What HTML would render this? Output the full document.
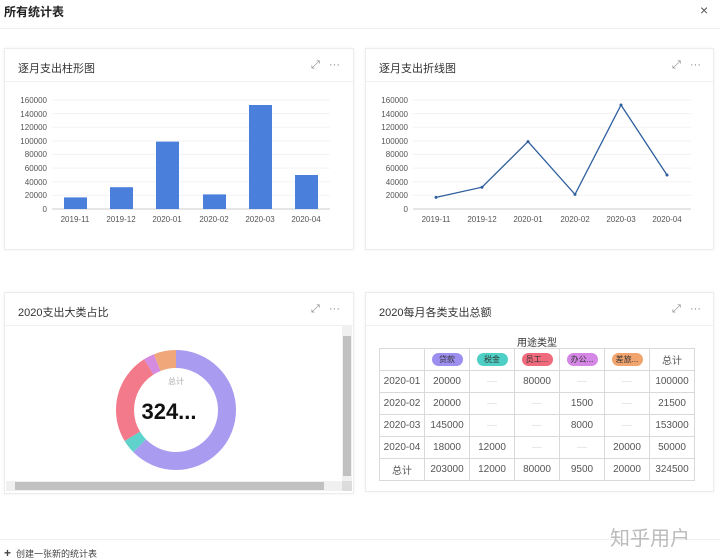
<!DOCTYPE html>
<html><head><meta charset="utf-8"><style>
*{margin:0;padding:0;box-sizing:border-box}
body{width:720px;height:560px;background:#fff;font-family:"Liberation Sans","Noto Sans CJK SC",sans-serif;position:relative;overflow:hidden;color:#333}
.a{position:absolute}
.card{position:absolute;background:#fff;border:1px solid #ececec;box-shadow:0 0 3px rgba(0,0,0,.06)}
.hd{position:absolute;left:0;right:0;top:0;height:33px;border-bottom:1px solid #f0f0f0;font-size:11px;color:#333;padding:11px 0 0 13px}
.ic{position:absolute;top:10px;font-size:11px;color:#888}
table{border-collapse:collapse;font-size:10px;color:#555}
td{border:1px solid #d9d9d9;height:22px;text-align:center;width:45px}
.tag{display:inline-block;width:31px;height:13px;border-radius:7px;font-size:8px;line-height:13px;color:#333}
.d{color:#ddd}
</style></head><body>
<div class="a" style="left:4px;top:3px;font-size:12px;font-weight:bold;color:#222">所有统计表</div>
<div class="a" style="left:700px;top:2px;font-size:14px;color:#555">×</div>
<div class="a" style="left:0;top:28px;width:720px;height:1px;background:#eee"></div>

<div class="card" style="left:4px;top:48px;width:350px;height:202px"><div class="hd">逐月支出柱形图</div><div class="ic" style="left:306px">⤢</div><div class="ic" style="left:324px">···</div></div>
<div class="card" style="left:365px;top:48px;width:349px;height:202px"><div class="hd">逐月支出折线图</div><div class="ic" style="left:306px">⤢</div><div class="ic" style="left:324px">···</div></div>
<div class="card" style="left:4px;top:292px;width:350px;height:202px"><div class="hd">2020支出大类占比</div><div class="ic" style="left:306px">⤢</div><div class="ic" style="left:324px">···</div></div>
<div class="card" style="left:365px;top:292px;width:349px;height:200px"><div class="hd">2020每月各类支出总额</div><div class="ic" style="left:306px">⤢</div><div class="ic" style="left:324px">···</div></div>

<svg class="a" style="left:0;top:0" width="720" height="560" font-family="Liberation Sans" font-size="8" fill="#555">
<g id="ax">
<g text-anchor="end">
<text x="47" y="103">160000</text><text x="47" y="117">140000</text><text x="47" y="130">120000</text><text x="47" y="144">100000</text><text x="47" y="157">80000</text><text x="47" y="171">60000</text><text x="47" y="185">40000</text><text x="47" y="198">20000</text><text x="47" y="212">0</text>
</g>
<g stroke="#f3f3f3"><line x1="52" x2="330" y1="100" y2="100"/><line x1="52" x2="330" y1="113.6" y2="113.6"/><line x1="52" x2="330" y1="127.2" y2="127.2"/><line x1="52" x2="330" y1="140.9" y2="140.9"/><line x1="52" x2="330" y1="154.5" y2="154.5"/><line x1="52" x2="330" y1="168.1" y2="168.1"/><line x1="52" x2="330" y1="181.7" y2="181.7"/><line x1="52" x2="330" y1="195.4" y2="195.4"/></g>
<line x1="52" x2="330" y1="209" y2="209" stroke="#ccc"/>
<g text-anchor="middle"><text x="75" y="222">2019-11</text><text x="121" y="222">2019-12</text><text x="167" y="222">2020-01</text><text x="214" y="222">2020-02</text><text x="260" y="222">2020-03</text><text x="306" y="222">2020-04</text></g>
</g>
<use href="#ax" x="361"/>
<g fill="#4a7fdb"><rect x="64" y="197.4" width="23" height="11.6"/><rect x="110" y="187.2" width="23" height="21.8"/><rect x="156" y="141.6" width="23" height="67.4"/><rect x="203" y="194.4" width="23" height="14.6"/><rect x="249" y="105" width="23" height="104"/><rect x="295" y="175" width="23" height="34"/></g>
<polyline fill="none" stroke="#2e5e9e" stroke-width="1.3" points="436,197.4 482,187.2 528,141.6 575,194.4 621,105 667,175"/>
<g fill="#2e5e9e"><circle cx="436" cy="197.4" r="1.5"/><circle cx="482" cy="187.2" r="1.5"/><circle cx="528" cy="141.6" r="1.5"/><circle cx="575" cy="194.4" r="1.5"/><circle cx="621" cy="105" r="1.5"/><circle cx="667" cy="175" r="1.5"/></g>

<g transform="rotate(-90 176 410)" fill="none" stroke-width="18">
<circle cx="176" cy="410" r="51" stroke="#a99cf0" stroke-dasharray="200.4 400"/>
<circle cx="176" cy="410" r="51" stroke="#5fd3cb" stroke-dasharray="0 200.4 11.9 400"/>
<circle cx="176" cy="410" r="51" stroke="#f27a8a" stroke-dasharray="0 212.3 79 400"/>
<circle cx="176" cy="410" r="51" stroke="#d48be0" stroke-dasharray="0 291.3 9.4 400"/>
<circle cx="176" cy="410" r="51" stroke="#f0a87a" stroke-dasharray="0 300.7 19.7 400"/>
</g>
<text x="176" y="384" text-anchor="middle" fill="#aaa" font-size="8" font-family="Noto Sans CJK SC">总计</text>
<text x="169" y="419" text-anchor="middle" fill="#111" font-size="22" font-weight="bold">324...</text>
<rect x="342" y="326" width="10" height="155" fill="#f0f0f0"/><rect x="343" y="336" width="8" height="140" fill="#c1c1c1"/>
<rect x="6" y="481" width="336" height="10" fill="#f0f0f0"/><rect x="15" y="482" width="309" height="8" fill="#c1c1c1"/>
<rect x="342" y="481" width="10" height="10" fill="#dcdcdc"/>
</svg>

<div class="a" style="left:379px;top:334px;width:316px;text-align:center;font-size:10px;color:#333">用途类型</div>
<table class="a" style="left:379px;top:348px">
<tr><td></td><td><span class="tag" style="background:#9d8ff0">贷款</span></td><td><span class="tag" style="background:#4fd0c6">税金</span></td><td><span class="tag" style="background:#f06a7d">员工...</span></td><td><span class="tag" style="background:#d487e4">办公...</span></td><td><span class="tag" style="background:#f2a46e">差旅...</span></td><td>总计</td></tr>
<tr><td>2020-01</td><td>20000</td><td class="d">—</td><td>80000</td><td class="d">—</td><td class="d">—</td><td>100000</td></tr>
<tr><td>2020-02</td><td>20000</td><td class="d">—</td><td class="d">—</td><td>1500</td><td class="d">—</td><td>21500</td></tr>
<tr><td>2020-03</td><td>145000</td><td class="d">—</td><td class="d">—</td><td>8000</td><td class="d">—</td><td>153000</td></tr>
<tr><td>2020-04</td><td>18000</td><td>12000</td><td class="d">—</td><td class="d">—</td><td>20000</td><td>50000</td></tr>
<tr><td>总计</td><td>203000</td><td>12000</td><td>80000</td><td>9500</td><td>20000</td><td>324500</td></tr>
</table>

<div class="a" style="left:0;top:539px;width:720px;height:1px;background:#eee"></div>
<div class="a" style="left:610px;top:522px;font-size:20px;color:#bbb">知乎用户</div>
<div class="a" style="left:4px;top:546px;font-size:9px;color:#444"><b style="font-size:12px">+</b>&nbsp; 创建一张新的统计表</div>
</body></html>
